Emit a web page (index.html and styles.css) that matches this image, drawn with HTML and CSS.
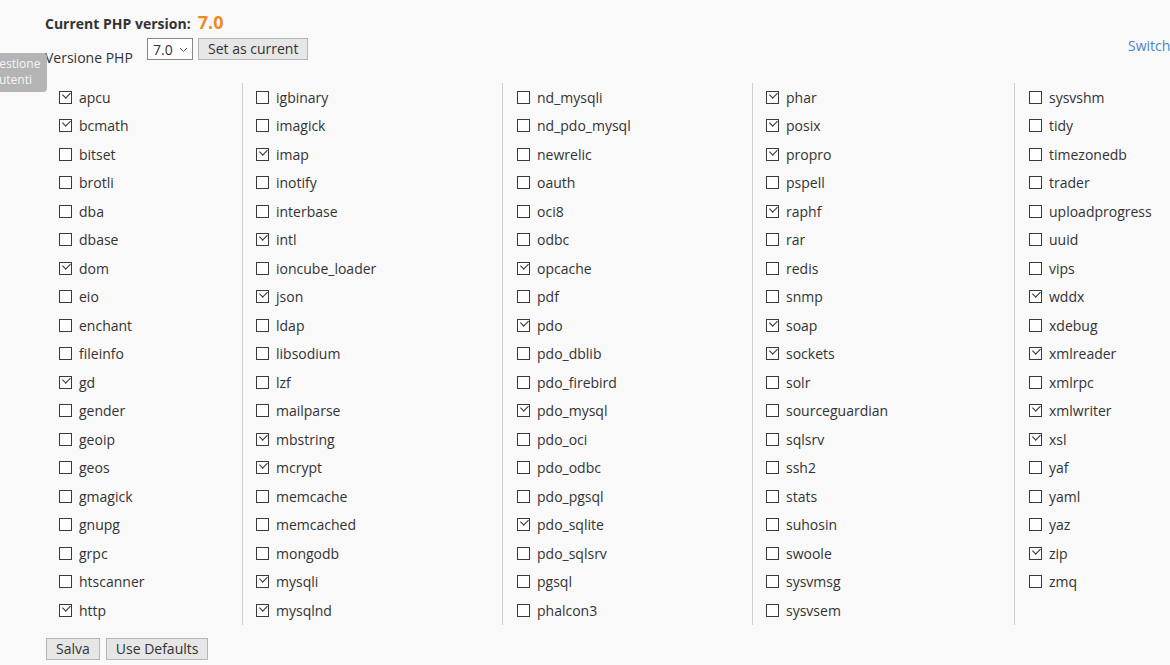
FILE: index.html
```html
<!DOCTYPE html>
<html>
<head>
<meta charset="utf-8">
<link rel="stylesheet" href="styles.css">
</head>
<body>
<div class="side-tab">Gestione<br>utenti</div>
<a class="switch" href="#">Switch</a>
<div class="page">
  <div class="current"><span class="current-label">Current PHP version:</span> <span class="current-ver">7.0</span></div>
  <div class="version-row">
    <span class="version-label">Versione PHP</span>
    <span class="select">7.0 <svg class="chev" width="9" height="6" viewBox="0 0 9 6"><path d="M1 1l3.5 3.5L8 1" fill="none" stroke="#555" stroke-width="1"/></svg></span>
    <button class="btn">Set as current</button>
  </div>
  <div class="cols">
    <div class="col c1">
      <label class="item"><span class="cb on"></span>apcu</label>
      <label class="item"><span class="cb on"></span>bcmath</label>
      <label class="item"><span class="cb"></span>bitset</label>
      <label class="item"><span class="cb"></span>brotli</label>
      <label class="item"><span class="cb"></span>dba</label>
      <label class="item"><span class="cb"></span>dbase</label>
      <label class="item"><span class="cb on"></span>dom</label>
      <label class="item"><span class="cb"></span>eio</label>
      <label class="item"><span class="cb"></span>enchant</label>
      <label class="item"><span class="cb"></span>fileinfo</label>
      <label class="item"><span class="cb on"></span>gd</label>
      <label class="item"><span class="cb"></span>gender</label>
      <label class="item"><span class="cb"></span>geoip</label>
      <label class="item"><span class="cb"></span>geos</label>
      <label class="item"><span class="cb"></span>gmagick</label>
      <label class="item"><span class="cb"></span>gnupg</label>
      <label class="item"><span class="cb"></span>grpc</label>
      <label class="item"><span class="cb"></span>htscanner</label>
      <label class="item"><span class="cb on"></span>http</label>
    </div>
    <div class="col c2">
      <label class="item"><span class="cb"></span>igbinary</label>
      <label class="item"><span class="cb"></span>imagick</label>
      <label class="item"><span class="cb on"></span>imap</label>
      <label class="item"><span class="cb"></span>inotify</label>
      <label class="item"><span class="cb"></span>interbase</label>
      <label class="item"><span class="cb on"></span>intl</label>
      <label class="item"><span class="cb"></span>ioncube_loader</label>
      <label class="item"><span class="cb on"></span>json</label>
      <label class="item"><span class="cb"></span>ldap</label>
      <label class="item"><span class="cb"></span>libsodium</label>
      <label class="item"><span class="cb"></span>lzf</label>
      <label class="item"><span class="cb"></span>mailparse</label>
      <label class="item"><span class="cb on"></span>mbstring</label>
      <label class="item"><span class="cb on"></span>mcrypt</label>
      <label class="item"><span class="cb"></span>memcache</label>
      <label class="item"><span class="cb"></span>memcached</label>
      <label class="item"><span class="cb"></span>mongodb</label>
      <label class="item"><span class="cb on"></span>mysqli</label>
      <label class="item"><span class="cb on"></span>mysqlnd</label>
    </div>
    <div class="col c3">
      <label class="item"><span class="cb"></span>nd_mysqli</label>
      <label class="item"><span class="cb"></span>nd_pdo_mysql</label>
      <label class="item"><span class="cb"></span>newrelic</label>
      <label class="item"><span class="cb"></span>oauth</label>
      <label class="item"><span class="cb"></span>oci8</label>
      <label class="item"><span class="cb"></span>odbc</label>
      <label class="item"><span class="cb on"></span>opcache</label>
      <label class="item"><span class="cb"></span>pdf</label>
      <label class="item"><span class="cb on"></span>pdo</label>
      <label class="item"><span class="cb"></span>pdo_dblib</label>
      <label class="item"><span class="cb"></span>pdo_firebird</label>
      <label class="item"><span class="cb on"></span>pdo_mysql</label>
      <label class="item"><span class="cb"></span>pdo_oci</label>
      <label class="item"><span class="cb"></span>pdo_odbc</label>
      <label class="item"><span class="cb"></span>pdo_pgsql</label>
      <label class="item"><span class="cb on"></span>pdo_sqlite</label>
      <label class="item"><span class="cb"></span>pdo_sqlsrv</label>
      <label class="item"><span class="cb"></span>pgsql</label>
      <label class="item"><span class="cb"></span>phalcon3</label>
    </div>
    <div class="col c4">
      <label class="item"><span class="cb on"></span>phar</label>
      <label class="item"><span class="cb on"></span>posix</label>
      <label class="item"><span class="cb on"></span>propro</label>
      <label class="item"><span class="cb"></span>pspell</label>
      <label class="item"><span class="cb on"></span>raphf</label>
      <label class="item"><span class="cb"></span>rar</label>
      <label class="item"><span class="cb"></span>redis</label>
      <label class="item"><span class="cb"></span>snmp</label>
      <label class="item"><span class="cb on"></span>soap</label>
      <label class="item"><span class="cb on"></span>sockets</label>
      <label class="item"><span class="cb"></span>solr</label>
      <label class="item"><span class="cb"></span>sourceguardian</label>
      <label class="item"><span class="cb"></span>sqlsrv</label>
      <label class="item"><span class="cb"></span>ssh2</label>
      <label class="item"><span class="cb"></span>stats</label>
      <label class="item"><span class="cb"></span>suhosin</label>
      <label class="item"><span class="cb"></span>swoole</label>
      <label class="item"><span class="cb"></span>sysvmsg</label>
      <label class="item"><span class="cb"></span>sysvsem</label>
    </div>
    <div class="col c5">
      <label class="item"><span class="cb"></span>sysvshm</label>
      <label class="item"><span class="cb"></span>tidy</label>
      <label class="item"><span class="cb"></span>timezonedb</label>
      <label class="item"><span class="cb"></span>trader</label>
      <label class="item"><span class="cb"></span>uploadprogress</label>
      <label class="item"><span class="cb"></span>uuid</label>
      <label class="item"><span class="cb"></span>vips</label>
      <label class="item"><span class="cb on"></span>wddx</label>
      <label class="item"><span class="cb"></span>xdebug</label>
      <label class="item"><span class="cb on"></span>xmlreader</label>
      <label class="item"><span class="cb"></span>xmlrpc</label>
      <label class="item"><span class="cb on"></span>xmlwriter</label>
      <label class="item"><span class="cb on"></span>xsl</label>
      <label class="item"><span class="cb"></span>yaf</label>
      <label class="item"><span class="cb"></span>yaml</label>
      <label class="item"><span class="cb"></span>yaz</label>
      <label class="item"><span class="cb on"></span>zip</label>
      <label class="item"><span class="cb"></span>zmq</label>
    </div>
  </div>
  <div class="actions">
    <button class="btn">Salva</button>
    <button class="btn">Use Defaults</button>
  </div>
</div>
</body>
</html>
```

FILE: styles.css
```css
html, body {
  margin: 0;
  padding: 0;
  background: #f9f9f9;
  font-family: "Open Sans", "Liberation Sans", sans-serif;
  color: #333;
  overflow: hidden;
}
body {
  position: relative;
  width: 1170px;
  height: 665px;
}
.page {
  padding: 12px 0 0 45px;
}
.current {
  height: 20px;
  line-height: 20px;
}
.current-label {
  font-weight: 700;
  font-size: 14px;
  color: #333;
}
.current-ver {
  font-weight: 700;
  font-size: 18px;
  color: #ef8a27;
  margin-left: 3px;
}
.version-row {
  display: flex;
  align-items: flex-start;
  margin-top: 6px;
  height: 29px;
}
.version-label {
  font-size: 14px;
  line-height: 19px;
  margin-top: 10px;
  width: 102px;
}
.select {
  box-sizing: border-box;
  display: flex;
  align-items: center;
  justify-content: space-between;
  width: 46px;
  height: 22px;
  padding: 0 4px 0 5px;
  border: 1px solid #888;
  background: #fff;
  font-size: 14px;
  color: #333;
}
.chev { margin-top: 1px; }
.btn {
  box-sizing: border-box;
  height: 22px;
  padding: 0 9px;
  margin: 0 0 0 5px;
  border: 1px solid #b5b5b5;
  background: #e6e6e6;
  font-family: "Open Sans", "Liberation Sans", sans-serif;
  font-size: 14px;
  color: #333;
  line-height: 20px;
}
.cols {
  display: grid;
  grid-template-columns: 197px 260px 250px 262px 1fr;
  margin-top: 16px;
  height: 542px;
}
.col {
  padding-top: 0;
  padding-left: 14px;
}
.c2, .c3, .c4, .c5 {
  border-left: 1px solid #cfcfcf;
  padding-left: 13px;
}
.c3, .c5 { padding-left: 14px; }
.item {
  display: flex;
  align-items: center;
  height: 28.5px;
  font-size: 14px;
  color: #333;
}
.cb {
  box-sizing: border-box;
  position: relative;
  width: 13px;
  height: 13px;
  border: 1px solid #3a3a3a;
  background: #fff;
  margin-right: 7px;
  flex: none;
}
.cb.on::after {
  content: "";
  position: absolute;
  left: 3px;
  top: 1px;
  width: 6px;
  height: 3.5px;
  border-left: 1px solid #333;
  border-bottom: 1px solid #333;
  transform: translate(-1px, 2px) rotate(-45deg) scale(1.05);
  transform-origin: 0 0;
}
.actions {
  display: flex;
  margin-top: 13px;
}
.actions .btn:first-child { margin-left: 1px; }
.actions .btn { margin-right: 1px; }
.side-tab {
  position: absolute;
  left: -16px;
  top: 53px;
  width: 63px;
  height: 39px;
  box-sizing: border-box;
  padding: 3px 0 0 0;
  text-align: center;
  background: #b4b4b4;
  border-radius: 4px;
  color: #f4f4f4;
  font-size: 12px;
  line-height: 16px;
}
.switch {
  position: absolute;
  left: 1128px;
  top: 36px;
  font-size: 14px;
  color: #4a86c5;
  text-decoration: none;
}
```
